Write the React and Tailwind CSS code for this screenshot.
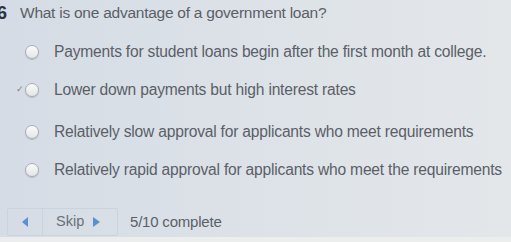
import React from 'react';

const options = [
  { text: 'Payments for student loans begin after the first month at college.', mt: 'mt-[20px]' },
  { text: 'Lower down payments but high interest rates', mt: 'mt-[22px]', mark: true },
  { text: 'Relatively slow approval for applicants who meet requirements', mt: 'mt-[26px]' },
  { text: 'Relatively rapid approval for applicants who meet the requirements', mt: 'mt-[22px]' },
];

const Radio = () => (
  <span className="w-[14px] h-[14px] rounded-full border border-[#a9adb3] bg-gradient-to-b from-[#fbfbfb] to-[#e3e5e8] shadow-[0_1px_1px_rgba(0,0,0,0.15)] shrink-0" />
);

export default function App() {
  return (
    <div
      className="w-[511px] h-[242px] overflow-hidden bg-gradient-to-r from-[#d5dce5] via-[#dde2e8] to-[#e3e7ea] text-[#5b5f67] relative"
      style={{ fontFamily: '"Liberation Sans", Arial, sans-serif' }}
    >
      <div className="flex items-center h-[24px] pt-[2px]">
        <span className="w-[7px] overflow-hidden text-[#2f3238] font-bold text-[18px] leading-none shrink-0">
          <span className="-ml-[3px] block">6</span>
        </span>
        <span className="ml-[13px] text-[15.5px] tracking-[-0.25px]">What is one advantage of a government loan?</span>
      </div>

      <div className="flex flex-col">
        {options.map((o, i) => (
          <div key={i} className={`flex items-center h-[16px] ${o.mt}`}>
            <span className="w-[25px] shrink-0 flex justify-end pr-[1px] text-[9px] text-[#7a7e85]">
              {o.mark ? '✓' : ''}
            </span>
            <Radio />
            <span className="ml-[15px] text-[15.6px] tracking-[-0.2px] whitespace-nowrap">{o.text}</span>
          </div>
        ))}
      </div>

      <div className="flex items-center mt-[30px] ml-[7px]">
        <div className="flex h-[28px] border border-[#cdd3db] rounded-[2px]">
          <div className="w-[35px] flex items-center justify-center border-r border-[#cdd3db]">
            <svg width="6" height="10" viewBox="0 0 6 10">
              <path d="M6 0 L0 5 L6 10 Z" fill="#5b8fd0" />
            </svg>
          </div>
          <div className="w-[74px] flex items-center pl-[13px] gap-[9px]">
            <span className="text-[14.5px] text-[#6b6f77]">Skip</span>
            <svg width="7" height="10" viewBox="0 0 7 10">
              <path d="M0 0 L7 5 L0 10 Z" fill="#5b8fd0" />
            </svg>
          </div>
        </div>
        <span className="ml-[12px] text-[15px] tracking-[-0.2px]">5/10 complete</span>
      </div>

      <div className="absolute left-0 right-0 bottom-0 h-[5px] bg-[#eceeee]" />
    </div>
  );
}
